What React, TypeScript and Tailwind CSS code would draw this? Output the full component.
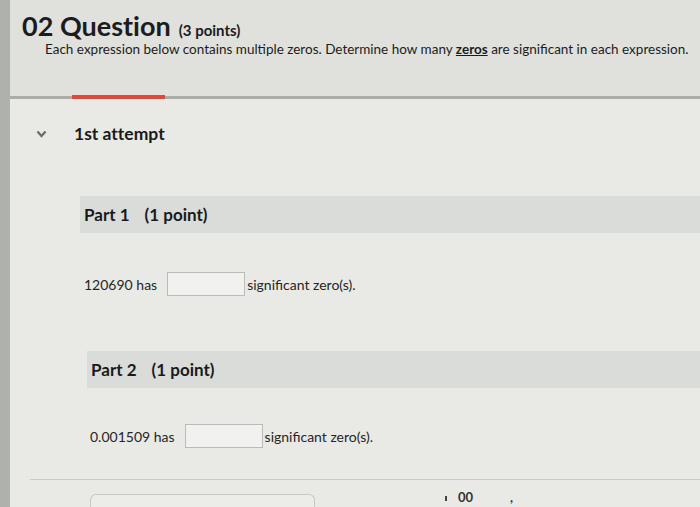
import React from 'react';

const AnswerRow = ({ value, offset }: { value: string; offset: string }) => (
  <div className={`flex items-center text-[14px] text-[#262626] ${offset}`}>
    <span>{value} has</span>
    <input
      type="text"
      className="ml-[10px] w-[78px] h-[24px] border border-[#b9bcb7] bg-[#f1f2ef] outline-none"
    />
    <span className="ml-[2px]">significant zero(s).</span>
  </div>
);

const PartHeader = ({ n, offset }: { n: number; offset: string }) => (
  <div className={`h-[37px] bg-[#d9dcd8] flex items-center pl-[4px] text-[17px] font-bold text-[#1a1a1a] ${offset}`}>
    <span>Part {n}</span>
    <span className="ml-[15px]">(1 point)</span>
  </div>
);

export default function App() {
  return (
    <div className="w-[700px] h-[507px] flex overflow-hidden bg-[#e9eae5] font-['Lato','Open_Sans',sans-serif]">
      {/* left rail */}
      <div className="w-[10px] shrink-0 bg-[#aeb2ab]" />

      <div className="flex-1 flex flex-col [&>*]:shrink-0">
        {/* question header */}
        <div className="h-[96px] bg-[#e0e1dd] pl-[12px] pt-[11px]">
          <div className="flex items-baseline text-[#1c1c1c]">
            <span className="text-[27px] font-bold leading-[30px] [font-variant-ligatures:no-common-ligatures]">02 Question</span>
            <span className="ml-[8px] text-[15px] font-bold">(3 points)</span>
          </div>
          <p className="-mt-[3px] pl-[23px] text-[13.5px] text-[#1c1c1c]">
            Each expression below contains multiple zeros. Determine how many{' '}
            <span className="font-bold underline">zeros</span> are significant in each expression.
          </p>
        </div>

        {/* progress line */}
        <div className="relative h-[3px] bg-[#a9aea7]">
          <div className="absolute left-[62px] -top-[1px] w-[93px] h-[4px] bg-[#e2473b]" />
        </div>

        {/* attempt */}
        <div className="mt-[25px] flex items-center pl-[26px] h-[20px]">
          <svg width="11" height="8" viewBox="0 0 11 8" className="text-[#6b6b6b]">
            <path d="M1.5 1.5 L5.5 6 L9.5 1.5" fill="none" stroke="currentColor" strokeWidth="2.2" />
          </svg>
          <span className="ml-[27px] text-[17.5px] font-bold text-[#1a1a1a] [font-variant-ligatures:no-common-ligatures]">1st attempt</span>
        </div>

        <div className="mt-[52px]">
          <PartHeader n={1} offset="ml-[70px]" />
        </div>
        <div className="mt-[39px]">
          <AnswerRow value="120690" offset="ml-[74px]" />
        </div>

        <div className="mt-[55px]">
          <PartHeader n={2} offset="ml-[77px]" />
        </div>
        <div className="mt-[36px]">
          <AnswerRow value="0.001509" offset="ml-[80px]" />
        </div>

        {/* footer hint */}
        <div className="mt-[31px] ml-[20px] h-px bg-[#c9ccc5]" />
        <div className="mt-[14px] flex items-start">
          <div className="ml-[80px] w-[225px] h-[14px] rounded-t-[6px] border border-b-0 border-[#c7c9c4] bg-[#ecede9]" />
          <div className="ml-[130px] flex items-start gap-[3px] text-[13px] font-bold text-[#333] leading-none">
            <span className="w-[2px] h-[5px] bg-[#444] mt-[2px]" />
            <span className="ml-[8px] -mt-[3px]">00</span>
            <span className="ml-[34px] -mt-[3px]">,</span>
          </div>
        </div>
      </div>
    </div>
  );
}
